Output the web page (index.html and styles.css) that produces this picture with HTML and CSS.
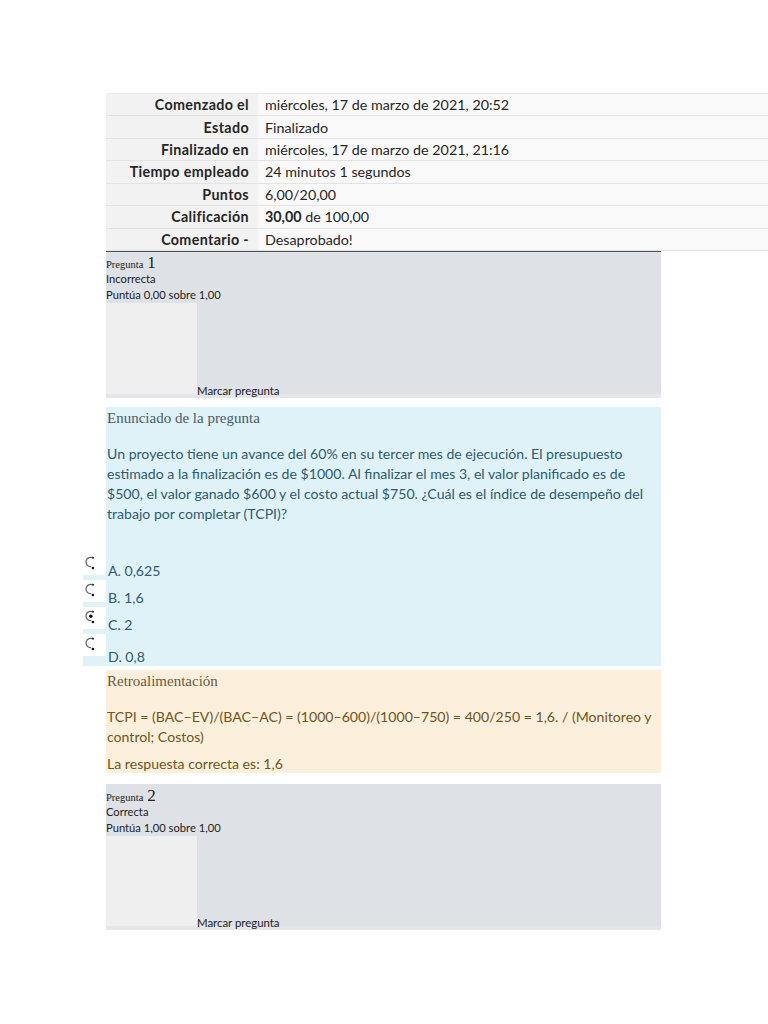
FILE: index.html
```html
<!DOCTYPE html>
<html lang="es">
<head>
<meta charset="utf-8">
<link rel="stylesheet" href="styles.css">
</head>
<body>
<div class="page">
  <div class="summary">
    <div class="sk">Comenzado el</div><div class="sv">miércoles, 17 de marzo de 2021, 20:52</div>
    <div class="sk">Estado</div><div class="sv">Finalizado</div>
    <div class="sk">Finalizado en</div><div class="sv">miércoles, 17 de marzo de 2021, 21:16</div>
    <div class="sk">Tiempo empleado</div><div class="sv">24 minutos 1 segundos</div>
    <div class="sk">Puntos</div><div class="sv">6,00/20,00</div>
    <div class="sk">Calificación</div><div class="sv"><b>30,00</b>&nbsp;de 100,00</div>
    <div class="sk">Comentario -</div><div class="sv">Desaprobado!</div>
  </div>
  <div class="rule"></div>

  <div class="qinfo">
    <div class="qno"><span class="qword">Pregunta</span> <span class="qnum">1</span></div>
    <div class="qstate">Incorrecta</div>
    <div class="qgrade">Puntúa 0,00 sobre 1,00</div>
    <div class="qflag">
      <div class="flagbox"></div>
      <div class="flagtext">Marcar pregunta</div>
    </div>
  </div>

  <div class="qtext">
    <div class="qhead">Enunciado de la pregunta</div>
    <p class="qpara">Un proyecto tiene un avance del 60% en su tercer mes de ejecución. El presupuesto estimado a la finalización es de $1000. Al finalizar el mes 3, el valor planificado es de $500, el valor ganado $600 y el costo actual $750. ¿Cuál es el índice de desempeño del trabajo por completar (TCPI)?</p>
    <div class="answers">
      <div class="opt">
        <span class="radio"><svg width="23" height="22" viewBox="0 0 23 22"><path d="M10.4 5.4 A4.6 4.6 0 1 0 8.2 13.6" fill="none" stroke="#666" stroke-width="1.3"/><path d="M9.2 4 L11 5" stroke="#222" stroke-width="1.3"/><circle cx="9.9" cy="15" r="1.3" fill="#111"/></svg></span>
        <span class="olabel">A. 0,625</span>
      </div>
      <div class="opt">
        <span class="radio"><svg width="23" height="22" viewBox="0 0 23 22"><path d="M10.4 5.4 A4.6 4.6 0 1 0 8.2 13.6" fill="none" stroke="#666" stroke-width="1.3"/><path d="M9.2 4 L11 5" stroke="#222" stroke-width="1.3"/><circle cx="9.9" cy="15" r="1.3" fill="#111"/></svg></span>
        <span class="olabel">B. 1,6</span>
      </div>
      <div class="opt">
        <span class="radio"><svg width="23" height="22" viewBox="0 0 23 22"><path d="M10.4 5.4 A4.6 4.6 0 1 0 8.2 13.6" fill="none" stroke="#666" stroke-width="1.3"/><path d="M9.2 4 L11 5" stroke="#222" stroke-width="1.3"/><circle cx="7.8" cy="9.2" r="1.8" fill="#111"/><circle cx="9.9" cy="15" r="1.3" fill="#111"/></svg></span>
        <span class="olabel">C. 2</span>
      </div>
      <div class="opt last">
        <span class="radio"><svg width="23" height="22" viewBox="0 0 23 22"><path d="M10.4 5.4 A4.6 4.6 0 1 0 8.2 13.6" fill="none" stroke="#666" stroke-width="1.3"/><path d="M9.2 4 L11 5" stroke="#222" stroke-width="1.3"/><circle cx="9.9" cy="15" r="1.3" fill="#111"/></svg></span>
        <span class="olabel">D. 0,8</span>
      </div>
    </div>
  </div>

  <div class="feedback">
    <div class="fhead">Retroalimentación</div>
    <p class="fpara">TCPI = (BAC–EV)/(BAC–AC) = (1000–600)/(1000–750) = 400/250 = 1,6. / (Monitoreo y control; Costos)</p>
    <p class="fright">La respuesta correcta es: 1,6</p>
  </div>

  <div class="qinfo q2">
    <div class="qno"><span class="qword">Pregunta</span> <span class="qnum">2</span></div>
    <div class="qstate">Correcta</div>
    <div class="qgrade">Puntúa 1,00 sobre 1,00</div>
    <div class="qflag">
      <div class="flagbox"></div>
      <div class="flagtext">Marcar pregunta</div>
    </div>
  </div>
</div>
</body>
</html>
```

FILE: styles.css
```css
* { box-sizing: border-box; }
html, body { margin: 0; padding: 0; background: #ffffff; }
body { font-family: Lato, "Open Sans", sans-serif; color: #222; }

.page {
  padding-top: 93px;
  padding-left: 106px;
}

.summary {
  display: grid;
  grid-template-columns: 152px 510px;
  grid-auto-rows: 22.43px;
  font-size: 14.3px;
  border-top: 1px solid #e8e8e8;
  color: #262626;
}
.sk, .sv {
  display: flex;
  align-items: center;
  border-bottom: 1px solid #e3e3e3;
  white-space: nowrap;
}
.sk {
  justify-content: flex-end;
  font-weight: 700;
  background: #f2f2f2;
  padding-right: 9px;
  letter-spacing: 0.35px;
}
.sv {
  background: #f9f9f9;
  padding-left: 7px;
}
.sv b { font-weight: 700; }

.rule {
  width: 555px;
  height: 2px;
  background: #505050;
  margin-top: -1px;
}

.qinfo {
  width: 555px;
  height: 146px;
  background: #dee1e6;
  padding-top: 2px;
  display: flex;
  flex-direction: column;
  border-bottom: 4px solid #e4e6e9;
}
.qinfo.q2 { margin-top: 11px; height: 146px; padding-top: 3px; }
.qno { font-family: "Liberation Serif", "DejaVu Serif", serif; color: #222; line-height: 17px; height: 17px; }
.qword { font-size: 10.5px; }
.qnum { font-size: 17px; }
.qstate, .qgrade { font-size: 11.2px; line-height: 16px; color: #222; }
.qflag {
  flex: 1;
  display: flex;
  align-items: flex-end;
}
.flagbox {
  width: 91px;
  align-self: stretch;
  background: #efefef;
}
.flagtext { font-size: 11.4px; line-height: 12px; color: #222; margin-bottom: -3px; }

.qtext {
  width: 555px;
  margin-top: 9px;
  background: #def2f8;
  padding: 1px 0 0 1px;
  color: #2f5b6e;
  height: 258px;
}
.qhead {
  font-family: "Liberation Serif", "DejaVu Serif", serif;
  font-size: 15px;
  color: #4a5a62;
  line-height: 20px;
}
.qpara {
  margin: 16px 0 0;
  font-size: 14.1px;
  line-height: 20px;
  color: #2f5b6e;
}
.answers {
  margin-top: 29px;
  margin-left: -24px;
  background: #def2f8;
}
.opt {
  display: flex;
  align-items: flex-end;
  height: 27px;
}
.opt.last { height: 32px; }
.radio {
  width: 23px;
  height: 22px;
  background: #ffffff;
  align-self: flex-start;
  display: block;
}
.radio svg { display: block; }
.olabel {
  margin-left: 2px;
  font-size: 14.1px;
  line-height: 20px;
  color: #2f5b6e;
  margin-bottom: -1px;
}

.feedback {
  width: 555px;
  margin-top: 5px;
  background: #fcefdc;
  padding: 1px 0 0 1px;
  height: 103px;
  color: #6f5518;
}
.fhead {
  font-family: "Liberation Serif", "DejaVu Serif", serif;
  font-size: 15px;
  line-height: 20px;
  color: #6b5a3a;
}
.fpara {
  margin: 16px 0 0;
  font-size: 14.1px;
  line-height: 20px;
}
.fright {
  margin: 7px 0 0;
  font-size: 14.1px;
  line-height: 20px;
}
```
